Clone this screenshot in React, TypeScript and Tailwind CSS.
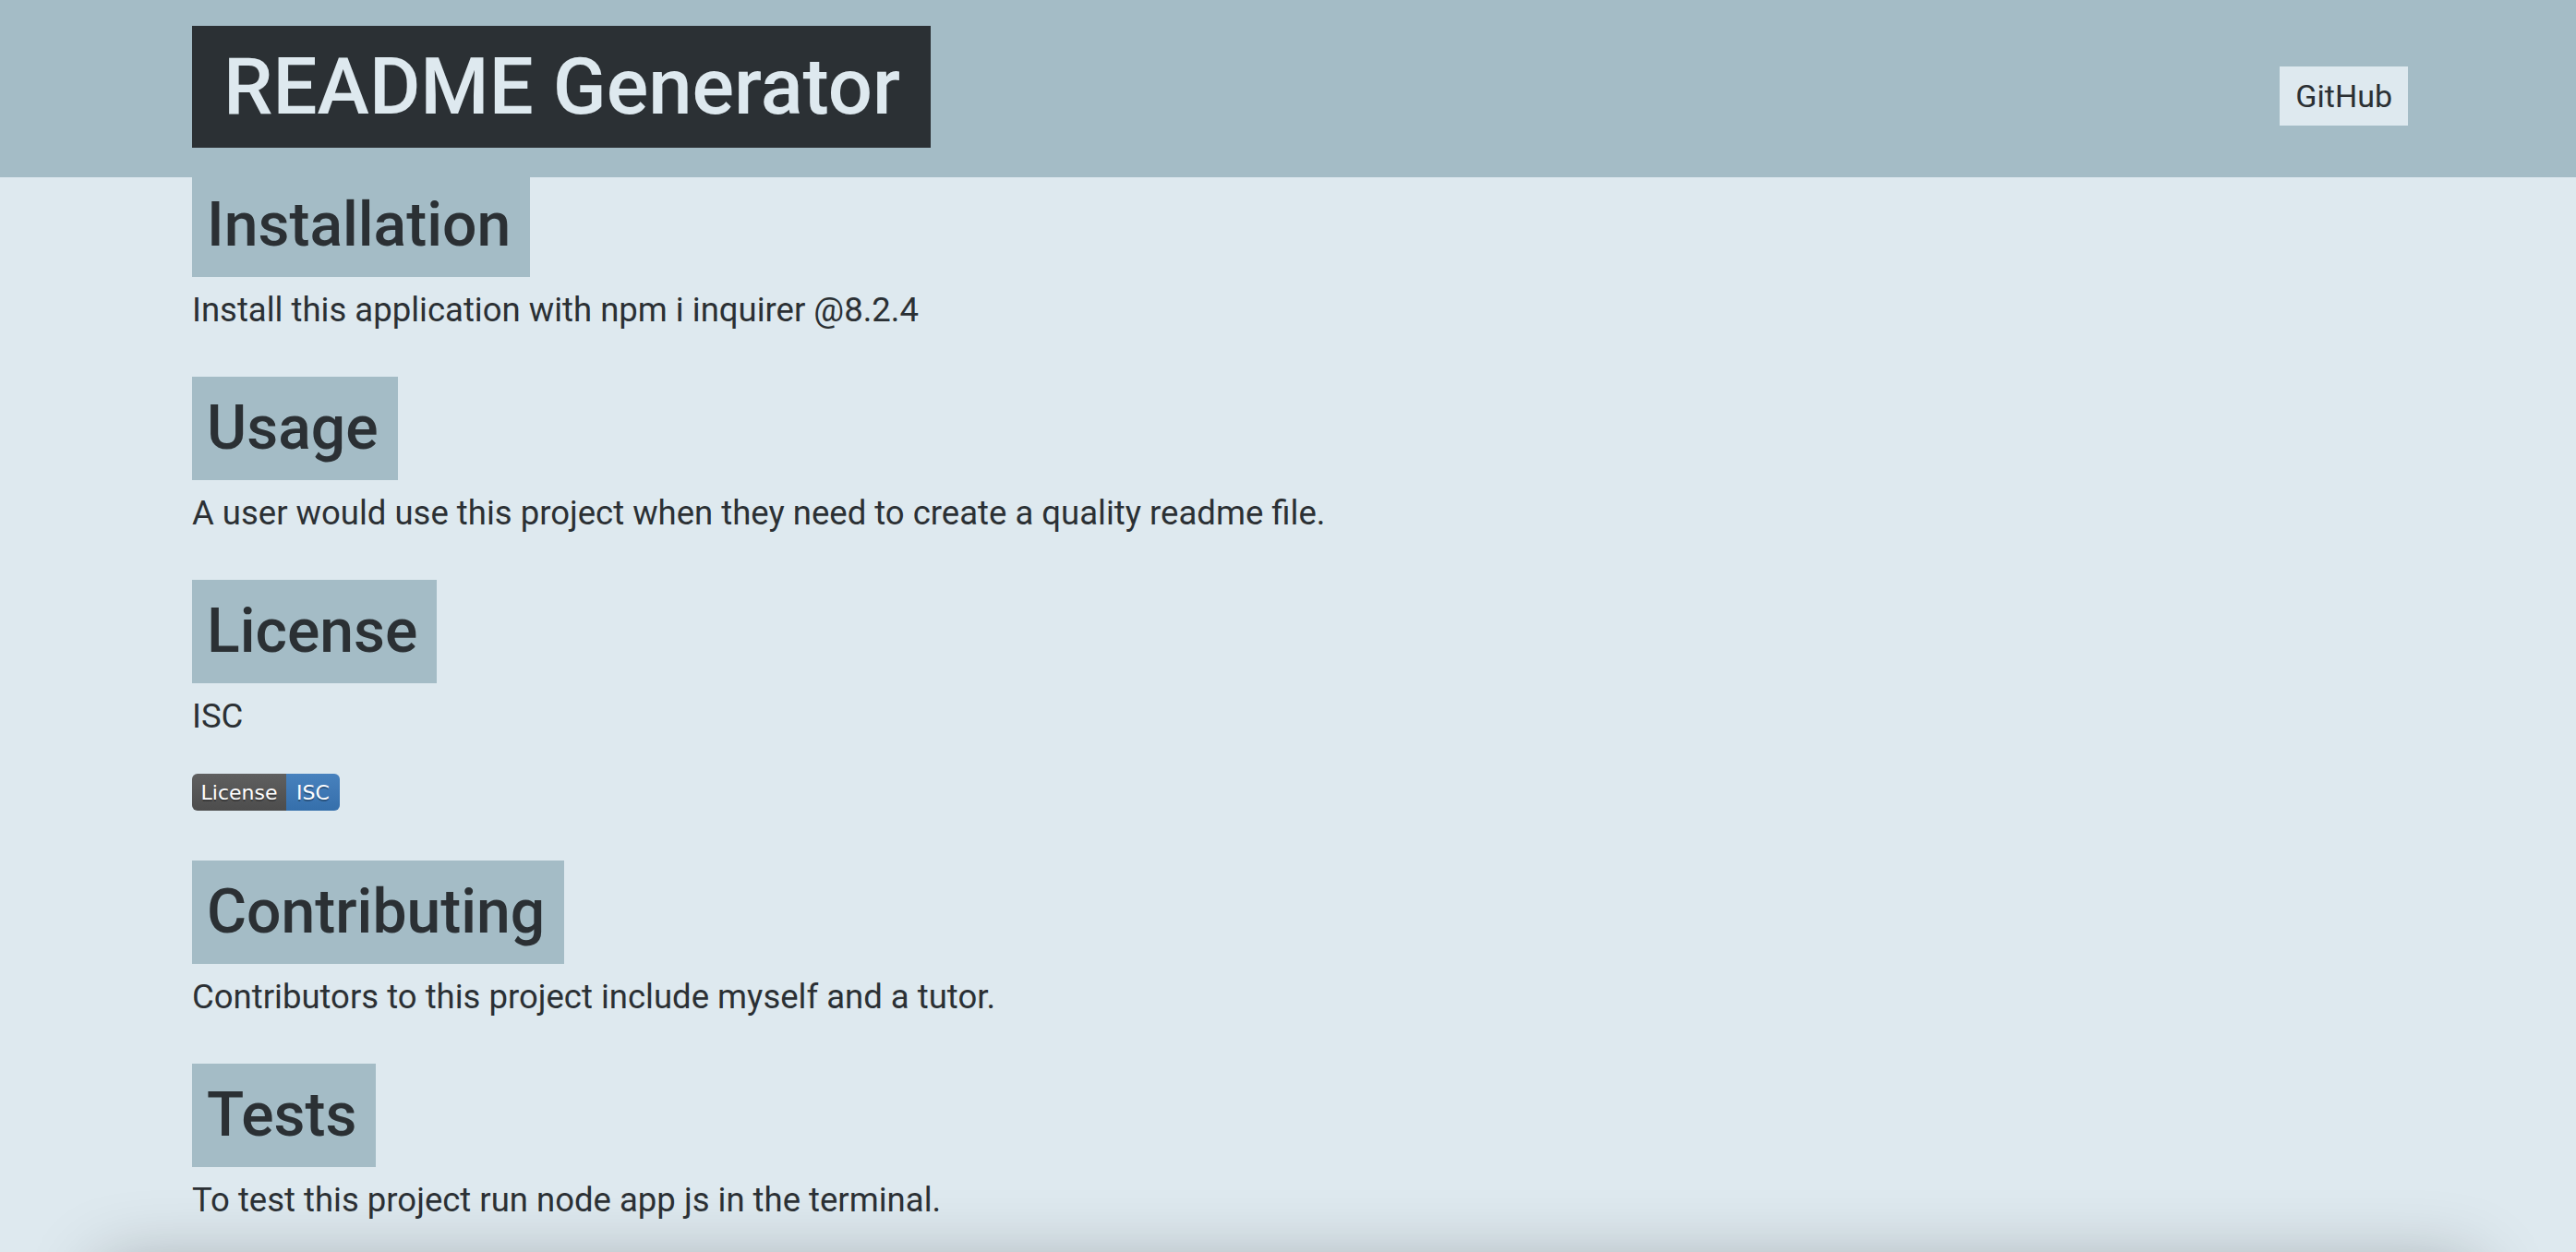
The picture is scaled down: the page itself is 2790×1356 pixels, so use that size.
const sections = [
  {
    title: "Installation",
    body: "Install this application with npm i inquirer @8.2.4",
  },
  {
    title: "Usage",
    body: "A user would use this project when they need to create a quality readme file.",
  },
  { title: "License", body: "ISC", badge: true },
  {
    title: "Contributing",
    body: "Contributors to this project include myself and a tutor.",
  },
  {
    title: "Tests",
    body: "To test this project run node app js in the terminal.",
  },
];

function LicenseBadge() {
  return (
    <svg
      width="160"
      height="40"
      viewBox="0 0 80 20"
      className="mt-[35px] mb-[54px] block"
      role="img"
      aria-label="License: ISC"
    >
      <defs>
        <linearGradient id="badgeShine" x2="0" y2="100%">
          <stop offset="0" stopColor="#bbb" stopOpacity=".1" />
          <stop offset="1" stopOpacity=".1" />
        </linearGradient>
        <clipPath id="badgeRound">
          <rect width="80" height="20" rx="3" fill="#fff" />
        </clipPath>
      </defs>
      <g clipPath="url(#badgeRound)">
        <rect width="51" height="20" fill="#555" />
        <rect x="51" width="29" height="20" fill="#3b7bbe" />
        <rect width="80" height="20" fill="url(#badgeShine)" />
      </g>
      <g
        fill="#fff"
        textAnchor="middle"
        fontFamily="Verdana,'DejaVu Sans',sans-serif"
        fontSize="11"
      >
        <text x="25.5" y="15" fill="#010101" fillOpacity=".3">
          License
        </text>
        <text x="25.5" y="14">
          License
        </text>
        <text x="65.5" y="15" fill="#010101" fillOpacity=".3">
          ISC
        </text>
        <text x="65.5" y="14">
          ISC
        </text>
      </g>
    </svg>
  );
}

export default function App() {
  return (
    <div className="min-h-screen bg-[#dee9ef] text-[#2b3034] font-['Roboto','Liberation_Sans',sans-serif] overflow-hidden">
      {/* Header */}
      <header className="relative z-10 flex items-start justify-between h-[192px] bg-[#a4bcc6] pt-[28px] pl-[208px] pr-[182px]">
        <h1 className="flex items-center h-[132px] pl-[34px] pr-[33px] bg-[#2b3034] text-[#dee9ef] text-[85px] font-medium leading-none">
          README Generator
        </h1>
        <a
          href="#"
          className="mt-[44px] flex items-center h-[64px] px-[17px] bg-[#dee9ef] text-[#2b3034] text-[34px] leading-none"
        >
          GitHub
        </a>
      </header>

      {/* Readme sections */}
      <main className="-mt-[4px] pl-[208px] flex flex-col items-start">
        {sections.map((section) => (
          <section key={section.title} className="flex flex-col items-start">
            <h2 className="h-[112px] pl-[16px] pr-[21px] bg-[#a4bcc6] text-[66px] font-medium leading-[112px]">
              {section.title}
            </h2>
            <p
              className={
                section.badge
                  ? "mt-[9px] text-[36.5px] leading-[54px]"
                  : "mt-[9px] mb-[45px] text-[36.5px] leading-[54px]"
              }
            >
              {section.body}
            </p>
            {section.badge && <LicenseBadge />}
          </section>
        ))}
      </main>

      {/* Footer */}
      <footer className="mx-[110px] h-[240px] bg-[#dee9ef] shadow-[0_0_80px_rgba(0,0,0,0.3)]" />
    </div>
  );
}
